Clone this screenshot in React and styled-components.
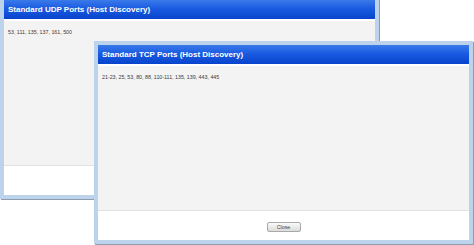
import React from "react";
import styled, { createGlobalStyle } from "styled-components";

const GlobalStyle = createGlobalStyle`
  html, body {
    margin: 0;
    padding: 0;
    background: #ffffff;
    font-family: "Liberation Sans", Arial, sans-serif;
  }
`;

function PortDialog({ title, ports, left, top, showClose }) {
  return (
    <StWindow $left={left} $top={top}>
      <StTitleBar>{title}</StTitleBar>
      <StBody>{ports}</StBody>
      <StFooter>{showClose && <StCloseBtn>Close</StCloseBtn>}</StFooter>
    </StWindow>
  );
}

function App() {
  return (
    <StDesktop>
      <GlobalStyle />
      <PortDialog
        title="Standard UDP Ports (Host Discovery)"
        ports="53, 111, 135, 137, 161, 500"
        left={0}
        top={-4}
      />
      <PortDialog
        title="Standard TCP Ports (Host Discovery)"
        ports="21-23, 25, 53, 80, 88, 110-111, 135, 139, 443, 445"
        left={94}
        top={41}
        showClose
      />
    </StDesktop>
  );
}

export default App;

const StDesktop = styled.div`
  position: relative;
  width: 474px;
  height: 245px;
  overflow: hidden;
  background: #ffffff;
`;

const StWindow = styled.div`
  position: absolute;
  left: ${(p) => p.$left}px;
  top: ${(p) => p.$top}px;
  width: 371px;
  height: 195px;
  display: flex;
  flex-direction: column;
  background: #ffffff;
  border: 4px solid #bdd3ec;
  box-shadow: 1px 1px 0 #8f9cad, inset 0 0 0 1px #dbe7f5;
`;

const StTitleBar = styled.div`
  height: 19px;
  flex: 0 0 19px;
  display: flex;
  align-items: center;
  padding-left: 4px;
  color: #ffffff;
  font-weight: bold;
  font-size: 8px;
  background: linear-gradient(#3a7ae9 0%, #1a5be2 45%, #0843cc 100%);
  border-bottom: 2px solid #ffffff;
  white-space: nowrap;
`;

const StBody = styled.div`
  flex: 1;
  background: #f3f3f3;
  padding: 8px 4px;
  font-size: 5.3px;
  color: #3a3a3a;
  border-bottom: 1px solid #e2e2e2;
`;

const StFooter = styled.div`
  height: 28px;
  flex: 0 0 28px;
  display: flex;
  align-items: center;
  justify-content: center;
  background: #ffffff;
  border-top: 1px solid #ffffff;
`;

const StCloseBtn = styled.button`
  width: 34px;
  height: 10px;
  padding: 0;
  margin-top: 1px;
  border: 1px solid #a9a9a9;
  border-radius: 2px;
  background: linear-gradient(#fafafa, #dcdcdc);
  font-family: "Liberation Sans", Arial, sans-serif;
  font-size: 5.3px;
  color: #444;
  line-height: 8px;
  cursor: pointer;
`;
